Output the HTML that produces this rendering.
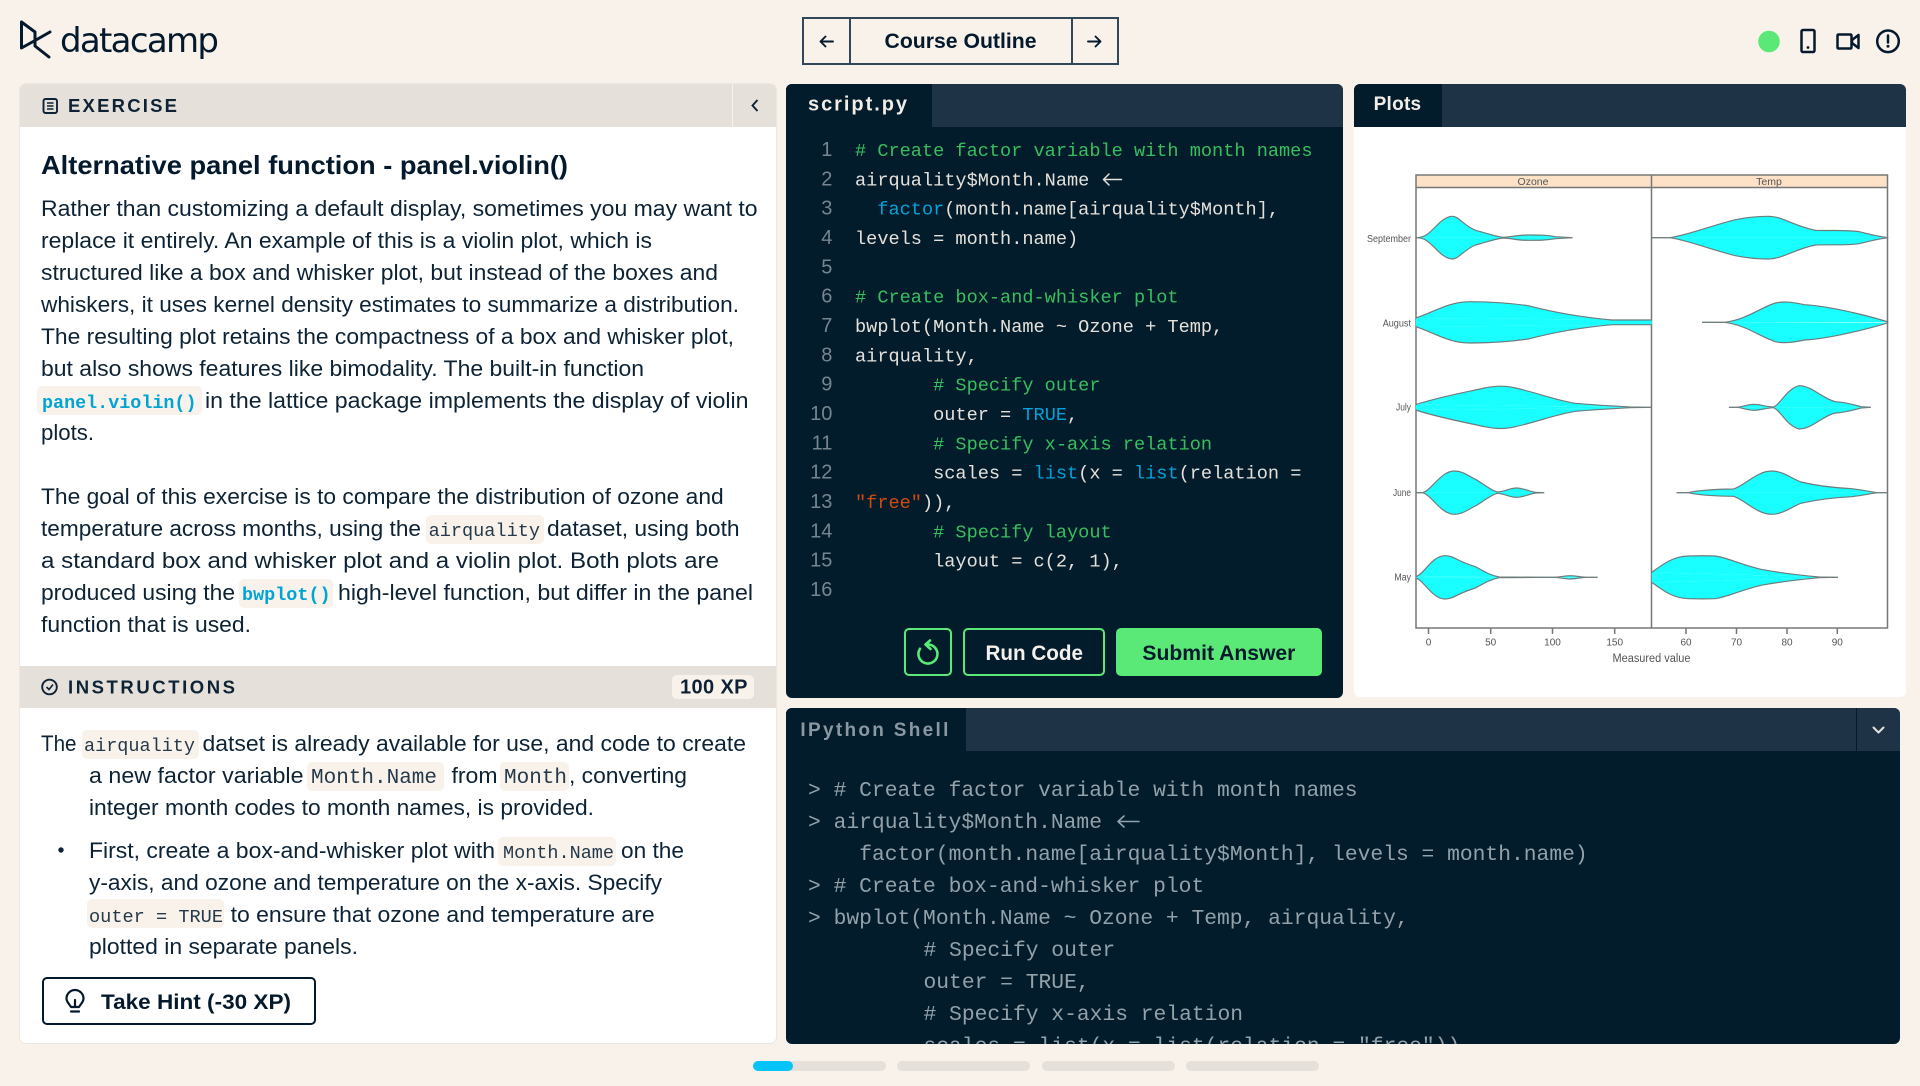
<!DOCTYPE html>
<html lang="en">
<head>
<meta charset="utf-8">
<title>DataCamp exercise</title>
<style>
html,body{margin:0;padding:0;width:1920px;height:1086px;overflow:hidden;background:#f8f2eb}
#root{position:relative;width:1920px;height:1086px;overflow:hidden;filter:blur(.35px)}
.p{position:absolute;box-sizing:border-box}
.white{background:#fff;border-radius:6px;box-shadow:0 0 0 1px #ece7e0}
.dark{background:#021c2c;border-radius:6px}
.hl{background:#e5e1da;border-radius:6px 6px 0 0}
.hd{background:#1f3347;border-radius:6px 6px 0 0}
.tab{background:#021c2c;border-radius:6px 0 0 0}
.bar{background:#e5e1da;border-radius:5px}
svg.o{position:absolute;left:0;top:0}
text{white-space:pre}
.b{font:22px "Liberation Sans",sans-serif;fill:#0d2335}
.h{font:bold 18.5px "Liberation Sans",sans-serif;fill:#0d2335}
.m{font:18.5px "Liberation Mono",monospace;fill:#25394a}
.mb{font:21px "Liberation Mono",monospace;fill:#25394a}
.blue{font:bold 18.5px "Liberation Mono",monospace;fill:#00a5d6}
.c{font:18.6px "Liberation Mono",monospace;fill:#e5e1da}
.n{font:20px "Liberation Sans",sans-serif;fill:#77858f;text-anchor:end}
.sh{font:21.3px "Liberation Mono",monospace;fill:#93a1a9}
.t{font:bold 21.5px "Liberation Sans",sans-serif}
.pl{font:10px "Liberation Sans",sans-serif;fill:#555}
.vi path{fill:#19ffff;stroke:#6e7c7c;stroke-width:1.2;vector-effect:non-scaling-stroke}
.vi polygon{fill:#19ffff;stroke:none}
</style>
</head>
<body>
<div id="root">
  <!-- Exercise column -->
  <div class="p white" style="left:20px;top:84px;width:756px;height:959px"></div>
  <div class="p hl" style="left:20px;top:84px;width:756px;height:43px"></div>
  <div class="p" style="left:732px;top:84px;width:1px;height:43px;background:#f8f2eb"></div>
  <div class="p" style="left:20px;top:666px;width:756px;height:42px;background:#e5e1da"></div>
  <div class="p" style="left:672px;top:675px;width:82px;height:24px;background:#f8f2eb;border-radius:5px"></div>
  <div class="p" style="left:37px;top:386px;width:165px;height:29px;background:#f8f2eb;border-radius:5px"></div>
  <div class="p" style="left:426px;top:515px;width:118px;height:29px;background:#f8f2eb;border-radius:5px"></div>
  <div class="p" style="left:239px;top:579px;width:94px;height:29px;background:#f8f2eb;border-radius:5px"></div>
  <div class="p" style="left:82px;top:730px;width:117px;height:29px;background:#f8f2eb;border-radius:5px"></div>
  <div class="p" style="left:307px;top:762px;width:137px;height:29px;background:#f8f2eb;border-radius:5px"></div>
  <div class="p" style="left:500px;top:762px;width:69px;height:29px;background:#f8f2eb;border-radius:5px"></div>
  <div class="p" style="left:498px;top:837px;width:118px;height:29px;background:#f8f2eb;border-radius:5px"></div>
  <div class="p" style="left:87px;top:899px;width:137px;height:29px;background:#f8f2eb;border-radius:5px"></div>
  <div class="p" style="left:42px;top:977px;width:274px;height:48px;border:2.5px solid #05192d;border-radius:5px"></div>

  <!-- Editor -->
  <div class="p dark" style="left:786px;top:84px;width:557px;height:614px"></div>
  <div class="p hd" style="left:786px;top:84px;width:557px;height:43px"></div>
  <div class="p tab" style="left:786px;top:84px;width:146px;height:43px"></div>
  <div class="p" style="left:904px;top:628px;width:48px;height:48px;border:2.5px solid #5ae877;border-radius:5px"></div>
  <div class="p" style="left:963px;top:628px;width:142px;height:48px;border:2.5px solid #5ae877;border-radius:5px"></div>
  <div class="p" style="left:1116px;top:628px;width:206px;height:48px;background:#5ae877;border-radius:5px"></div>

  <!-- Plots -->
  <div class="p white" style="left:1354px;top:84px;width:552px;height:613px;box-shadow:none"></div>
  <div class="p hd" style="left:1354px;top:84px;width:552px;height:43px"></div>
  <div class="p tab" style="left:1354px;top:84px;width:88px;height:43px"></div>

  <!-- Shell -->
  <div class="p dark" style="left:786px;top:708px;width:1114px;height:336px"></div>
  <div class="p hd" style="left:786px;top:708px;width:1114px;height:43px"></div>
  <div class="p tab" style="left:786px;top:708px;width:180px;height:43px"></div>
  <div class="p" style="left:1856px;top:708px;width:1px;height:43px;background:#021c2c"></div>

  <!-- Progress -->
  <div class="p bar" style="left:753px;top:1061px;width:133px;height:10px"></div>
  <div class="p bar" style="left:897px;top:1061px;width:133px;height:10px"></div>
  <div class="p bar" style="left:1042px;top:1061px;width:133px;height:10px"></div>
  <div class="p bar" style="left:1186px;top:1061px;width:133px;height:10px"></div>
  <div class="p" style="left:753px;top:1061px;width:40px;height:10px;background:#05c3fb;border-radius:5px"></div>

  <!-- Nav -->
  <div class="p" style="left:802px;top:17px;width:317px;height:48px;border:2px solid #33475a"></div>
  <div class="p" style="left:849px;top:17px;width:2px;height:48px;background:#33475a"></div>
  <div class="p" style="left:1071px;top:17px;width:2px;height:48px;background:#33475a"></div>

  <svg class="o" width="1920" height="1086" viewBox="0 0 1920 1086" xmlns="http://www.w3.org/2000/svg">
    <defs>
      <clipPath id="shc"><rect x="786" y="751" width="1114" height="293"/></clipPath>
    </defs>

    <!-- Logo -->
    <g fill="none" stroke="#05192d" stroke-width="3" stroke-linejoin="round" stroke-linecap="round">
      <path d="M21.5 22V48L35 40.5M21.5 22L35 32V46L49 57M35 40.5L50 32"/>
    </g>
    <text x="60" y="52" font-family="DejaVu Sans" font-size="34" fill="#05192d" textLength="159" lengthAdjust="spacing">datacamp</text>

    <!-- Nav content -->
    <g fill="none" stroke="#05192d" stroke-width="1.9" stroke-linecap="round" stroke-linejoin="round">
      <path d="M833 41.5H820.5M825.5 36.5L820.5 41.5L825.5 46.5"/>
      <path d="M1088 41.5H1100.5M1095.5 36.5L1100.5 41.5L1095.5 46.5"/>
    </g>
    <text class="t" x="884.5" y="48" fill="#05192d" textLength="152" lengthAdjust="spacingAndGlyphs">Course Outline</text>

    <!-- Header icons -->
    <circle cx="1769" cy="41.5" r="10.8" fill="#5ae877"/>
    <g fill="none" stroke="#05192d" stroke-width="2.5" stroke-linejoin="round">
      <rect x="1801.5" y="30" width="13" height="22" rx="1.5"/>
      <rect x="1837.5" y="34.5" width="14" height="14" rx="1"/>
      <path d="M1852 40L1858.5 35V48L1852 43Z"/>
      <circle cx="1888" cy="41.3" r="10.8"/>
    </g>
    <circle cx="1808" cy="47.5" r="1.4" fill="#05192d"/>
    <path d="M1888 35.5V42.5" stroke="#05192d" stroke-width="2.5" stroke-linecap="round"/>
    <circle cx="1888" cy="46.3" r="1.5" fill="#05192d"/>

    <!-- Exercise header -->
    <g fill="none" stroke="#0d2335" stroke-width="1.9">
      <rect x="43.5" y="99" width="13.5" height="14" rx="2"/>
      <path d="M47 103H53.5M47 106H53.5M47 109H53.5" stroke-width="1.4"/>
      <path d="M757.5 100L752.5 105.5L757.5 111" stroke-width="1.9"/>
      <circle cx="49.5" cy="687" r="7.3"/>
      <path d="M46.5 687L49 689.5L53 684.5" stroke-width="1.6"/>
    </g>
    <text class="h" x="68" y="112" textLength="109" lengthAdjust="spacing">EXERCISE</text>
    <text class="h" x="68" y="693.5" textLength="167" lengthAdjust="spacing">INSTRUCTIONS</text>
    <text class="h" x="680" y="693.5" textLength="67.5" lengthAdjust="spacing" style="font-size:20px">100 XP</text>

    <!-- Exercise copy -->
    <text x="41" y="174" font-family="Liberation Sans" font-size="26" font-weight="bold" fill="#05192d" textLength="527" lengthAdjust="spacingAndGlyphs">Alternative panel function - panel.violin()</text>
    <text class="b" x="41" y="216" textLength="716.6" lengthAdjust="spacingAndGlyphs">Rather than customizing a default display, sometimes you may want to</text>
    <text class="b" x="41" y="248" textLength="611" lengthAdjust="spacingAndGlyphs">replace it entirely. An example of this is a violin plot, which is</text>
    <text class="b" x="41" y="280" textLength="677" lengthAdjust="spacingAndGlyphs">structured like a box and whisker plot, but instead of the boxes and</text>
    <text class="b" x="41" y="312" textLength="698" lengthAdjust="spacingAndGlyphs">whiskers, it uses kernel density estimates to summarize a distribution.</text>
    <text class="b" x="41" y="344" textLength="693" lengthAdjust="spacingAndGlyphs">The resulting plot retains the compactness of a box and whisker plot,</text>
    <text class="b" x="41" y="376" textLength="603" lengthAdjust="spacingAndGlyphs">but also shows features like bimodality. The built-in function</text>
    <text class="blue" x="42" y="408" textLength="154.5" lengthAdjust="spacingAndGlyphs">panel.violin()</text>
    <text class="b" x="205" y="408" textLength="543.5" lengthAdjust="spacingAndGlyphs">in the lattice package implements the display of violin</text>
    <text class="b" x="41" y="440" textLength="53" lengthAdjust="spacingAndGlyphs">plots.</text>

    <text class="b" x="41" y="504" textLength="682.7" lengthAdjust="spacingAndGlyphs">The goal of this exercise is to compare the distribution of ozone and</text>
    <text class="b" x="41" y="536" textLength="380" lengthAdjust="spacingAndGlyphs">temperature across months, using the</text>
    <text class="m" x="428.6" y="536" textLength="111.4" lengthAdjust="spacingAndGlyphs">airquality</text>
    <text class="b" x="547" y="536" textLength="192.6" lengthAdjust="spacingAndGlyphs">dataset, using both</text>
    <text class="b" x="41" y="568" textLength="678" lengthAdjust="spacingAndGlyphs">a standard box and whisker plot and a violin plot. Both plots are</text>
    <text class="b" x="41" y="600" textLength="194" lengthAdjust="spacingAndGlyphs">produced using the</text>
    <text class="blue" x="242" y="600" textLength="88.6" lengthAdjust="spacingAndGlyphs">bwplot()</text>
    <text class="b" x="338" y="600" textLength="415" lengthAdjust="spacingAndGlyphs">high-level function, but differ in the panel</text>
    <text class="b" x="41" y="632" textLength="210" lengthAdjust="spacingAndGlyphs">function that is used.</text>

    <!-- Instructions copy -->
    <text class="b" x="41" y="751" textLength="35.5" lengthAdjust="spacingAndGlyphs">The</text>
    <text class="m" x="84" y="751" textLength="111" lengthAdjust="spacingAndGlyphs">airquality</text>
    <text class="b" x="202.5" y="751" textLength="543.5" lengthAdjust="spacingAndGlyphs">datset is already available for use, and code to create</text>
    <text class="b" x="89" y="783" textLength="214.5" lengthAdjust="spacingAndGlyphs">a new factor variable</text>
    <text class="mb" x="311" y="783" textLength="126" lengthAdjust="spacingAndGlyphs">Month.Name</text>
    <text class="b" x="451.5" y="783" textLength="46" lengthAdjust="spacingAndGlyphs">from</text>
    <text class="mb" x="504" y="783" textLength="63" lengthAdjust="spacingAndGlyphs">Month</text>
    <text class="b" x="569" y="783" textLength="118" lengthAdjust="spacingAndGlyphs">, converting</text>
    <text class="b" x="89" y="815" textLength="505" lengthAdjust="spacingAndGlyphs">integer month codes to month names, is provided.</text>
    <circle cx="61" cy="850" r="2.7" fill="#0d2335"/>
    <text class="b" x="89" y="858" textLength="406" lengthAdjust="spacingAndGlyphs">First, create a box-and-whisker plot with</text>
    <text class="m" x="503" y="858" textLength="111" lengthAdjust="spacingAndGlyphs">Month.Name</text>
    <text class="b" x="621" y="858" textLength="63" lengthAdjust="spacingAndGlyphs">on the</text>
    <text class="b" x="89" y="890" textLength="573" lengthAdjust="spacingAndGlyphs">y-axis, and ozone and temperature on the x-axis. Specify</text>
    <text class="m" x="89" y="922" textLength="134" lengthAdjust="spacingAndGlyphs">outer = TRUE</text>
    <text class="b" x="230.6" y="922" textLength="424" lengthAdjust="spacingAndGlyphs">to ensure that ozone and temperature are</text>
    <text class="b" x="89" y="954" textLength="269" lengthAdjust="spacingAndGlyphs">plotted in separate panels.</text>

    <!-- Hint button -->
    <g fill="none" stroke="#05192d" stroke-width="2.2" stroke-linecap="round" stroke-linejoin="round">
      <path d="M71 1007C69 1003.5 66.5 1002 66.5 998.5A8.5 8.5 0 1 1 83.5 998.5C83.5 1002 81 1003.5 79 1007Z"/>
      <path d="M71 1011.5H79M75 1007V1000"/>
    </g>
    <text class="t" x="101" y="1009" fill="#05192d" textLength="190" lengthAdjust="spacingAndGlyphs">Take Hint (-30 XP)</text>

    <!-- Editor tab -->
    <text x="808" y="110.5" font-family="Liberation Sans" font-weight="bold" font-size="20" fill="#f1ede7" textLength="99" lengthAdjust="spacing">script.py</text>

    <!-- Line numbers -->
    <text class="n" x="832.4" y="156">1</text>
    <text class="n" x="832.4" y="185.3">2</text>
    <text class="n" x="832.4" y="214.7">3</text>
    <text class="n" x="832.4" y="244">4</text>
    <text class="n" x="832.4" y="273.3">5</text>
    <text class="n" x="832.4" y="302.7">6</text>
    <text class="n" x="832.4" y="332">7</text>
    <text class="n" x="832.4" y="361.3">8</text>
    <text class="n" x="832.4" y="390.7">9</text>
    <text class="n" x="832.4" y="420">10</text>
    <text class="n" x="832.4" y="449.3">11</text>
    <text class="n" x="832.4" y="478.7">12</text>
    <text class="n" x="832.4" y="508">13</text>
    <text class="n" x="832.4" y="537.3">14</text>
    <text class="n" x="832.4" y="566.7">15</text>
    <text class="n" x="832.4" y="596">16</text>

    <!-- Code -->
    <text class="c" x="855" y="156" style="fill:#37bf5e"># Create factor variable with month names</text>
    <text class="c" x="855" y="185.3">airquality$Month.Name</text>
    <path d="M1103.5 179.5H1121.5M1109 174L1103.5 179.5L1109 185" fill="none" stroke="#e5e1da" stroke-width="1.5" stroke-linecap="round" stroke-linejoin="round"/>
    <text class="c" x="855" y="214.7">  <tspan style="fill:#00a3d9">factor</tspan>(month.name[airquality$Month],</text>
    <text class="c" x="855" y="244">levels = month.name)</text>
    <text class="c" x="855" y="302.7" style="fill:#37bf5e"># Create box-and-whisker plot</text>
    <text class="c" x="855" y="332">bwplot(Month.Name ~ Ozone + Temp,</text>
    <text class="c" x="855" y="361.3">airquality,</text>
    <text class="c" x="855" y="390.7" style="fill:#37bf5e">       # Specify outer</text>
    <text class="c" x="855" y="420">       outer = <tspan style="fill:#00a3d9">TRUE</tspan>,</text>
    <text class="c" x="855" y="449.3" style="fill:#37bf5e">       # Specify x-axis relation</text>
    <text class="c" x="855" y="478.7">       scales = <tspan style="fill:#00a3d9">list</tspan>(x = <tspan style="fill:#00a3d9">list</tspan>(relation =</text>
    <text class="c" x="855" y="508"><tspan style="fill:#d24a0c">"free"</tspan>)),</text>
    <text class="c" x="855" y="537.3" style="fill:#37bf5e">       # Specify layout</text>
    <text class="c" x="855" y="566.7">       layout = c(2, 1),</text>

    <!-- Editor buttons -->
    <g fill="none" stroke="#5ae877" stroke-width="2.6" stroke-linecap="round" stroke-linejoin="round">
      <path d="M928 644.5A9.5 9.5 0 1 1 920 648.8"/>
      <path d="M930 640.5L925.5 644.5L930.5 649"/>
    </g>
    <text class="t" x="985.5" y="660" fill="#f4f1ec" textLength="97.5" lengthAdjust="spacingAndGlyphs">Run Code</text>
    <text class="t" x="1142.4" y="660" fill="#05192d" textLength="153" lengthAdjust="spacingAndGlyphs">Submit Answer</text>

    <!-- Plots tab -->
    <text x="1373.6" y="110" font-family="Liberation Sans" font-weight="bold" font-size="19" fill="#f1ede7" textLength="47.5" lengthAdjust="spacing">Plots</text>

    <!-- Plot frame -->
    <rect x="1416" y="175" width="471.5" height="12.5" fill="#fde2c8"/>
    <g fill="none" stroke="#777" stroke-width="1.5">
      <rect x="1416" y="175" width="471.5" height="453"/>
      <path d="M1651.5 175V628M1416 187.5H1887.5"/>
      <path d="M1428.5 628V634M1490.7 628V634M1552.5 628V634M1614.7 628V634M1686 628V634M1736.5 628V634M1787 628V634M1837.3 628V634"/>
    </g>
    <text class="pl" x="1533" y="185" text-anchor="middle" style="font-size:10.5px">Ozone</text>
    <text class="pl" x="1769" y="185" text-anchor="middle" style="font-size:10.5px">Temp</text>
    <text class="pl" x="1367" y="242" textLength="44" lengthAdjust="spacingAndGlyphs">September</text>
    <text class="pl" x="1382.7" y="326.7" textLength="28.3" lengthAdjust="spacingAndGlyphs">August</text>
    <text class="pl" x="1396" y="410.7" textLength="15" lengthAdjust="spacingAndGlyphs">July</text>
    <text class="pl" x="1393" y="496" textLength="18" lengthAdjust="spacingAndGlyphs">June</text>
    <text class="pl" x="1394.4" y="580.7" textLength="16.6" lengthAdjust="spacingAndGlyphs">May</text>
    <text class="pl" x="1428.5" y="645.5" text-anchor="middle">0</text>
    <text class="pl" x="1490.7" y="645.5" text-anchor="middle">50</text>
    <text class="pl" x="1552.5" y="645.5" text-anchor="middle">100</text>
    <text class="pl" x="1614.7" y="645.5" text-anchor="middle">150</text>
    <text class="pl" x="1686" y="645.5" text-anchor="middle">60</text>
    <text class="pl" x="1736.5" y="645.5" text-anchor="middle">70</text>
    <text class="pl" x="1787" y="645.5" text-anchor="middle">80</text>
    <text class="pl" x="1837.3" y="645.5" text-anchor="middle">90</text>
    <text class="pl" x="1612.5" y="662" textLength="78" lengthAdjust="spacingAndGlyphs" style="font-size:11.5px">Measured value</text>

    <!-- Violins -->
    <g class="vi" transform="translate(1350,0) scale(.36364,.33333)">
      <g transform="translate(0,713)">
        <path id="v1" d="M181 0C205 0 215-10 240-38C258-58 270-64 282-64C298-64 315-35 345-22C375-14 390-6 420-1C445-2 460-8 490-8C520-8 540-8 565-3L612 0"/><use href="#v1" transform="scale(1,-1)"/>
        <path id="v2" d="M830 0L880 0C930-8 990-35 1060-54C1100-63 1130-64 1150-64C1190-64 1220-35 1280-22C1320-20 1360-24 1400-18C1430-10 1450-4 1480 0"/><use href="#v2" transform="scale(1,-1)"/>
      </g>
      <g transform="translate(0,967)">
        <polygon points="181,-13 830,-7 830,7 181,13"/>
        <path id="v3" d="M181-13C230-30 270-62 330-62C380-62 440-58 490-50C560-30 640-15 720-7L830-7"/><use href="#v3" transform="scale(1,-1)"/>
        <path id="v4" d="M968 0L1030 0C1090-8 1130-45 1170-58C1190-63 1210-62 1250-53C1300-50 1350-38 1400-25C1430-17 1460-8 1480-1"/><use href="#v4" transform="scale(1,-1)"/>
      </g>
    </g>
    <g class="vi" transform="translate(1350,380) scale(.36364,.33333)">
      <g transform="translate(0,82)">
        <polygon points="181,-8 828,0 181,8"/>
        <path id="v5" d="M181-8C240-30 330-48 370-58C400-65 430-65 455-58C510-45 570-20 620-12C670-7 720-4 770-1L828 0"/><use href="#v5" transform="scale(1,-1)"/>
        <path id="v6" d="M1042 0L1065 0C1085-3 1095-9 1110-9C1130-9 1140-2 1165-1C1185-10 1200-55 1235-65C1270-65 1300-25 1335-17C1365-15 1385-8 1405-2L1432 0"/><use href="#v6" transform="scale(1,-1)"/>
      </g>
      <g transform="translate(0,338)">
        <path id="v7" d="M181 0L200 0C225-8 250-65 287-65C310-65 325-50 345-40C365-28 385-8 405-2C425-3 440-14 458-14C475-14 490-5 510-1L534 0"/><use href="#v7" transform="scale(1,-1)"/>
        <path id="v8" d="M898 0L930 0C960-8 1000-10 1055-11C1090-25 1120-65 1160-65C1190-65 1215-42 1240-32C1280-22 1320-15 1380-12C1410-8 1435-2 1450 0L1478 0"/><use href="#v8" transform="scale(1,-1)"/>
      </g>
      <g transform="translate(0,592)">
        <polygon points="181,-2 410,-1 410,1 181,2"/>
        <path id="v9" d="M181-2C205-10 225-65 262-65C285-65 295-48 345-32C365-20 385-6 410-1L555 0C580 0 590-5 605-5C620-5 630-1 650 0L681 0"/><use href="#v9" transform="scale(1,-1)"/>
        <polygon points="830,-15 1342,0 830,15"/>
        <path id="v10" d="M830-15C860-38 885-62 930-64C960-65 980-65 1005-64C1040-58 1070-40 1130-24C1190-12 1240-6 1290-1L1342 0"/><use href="#v10" transform="scale(1,-1)"/>
      </g>
    </g>

    <!-- Shell -->
    <text x="800.4" y="736" font-family="Liberation Sans" font-weight="bold" font-size="19" fill="#8b98a2" textLength="148" lengthAdjust="spacing">IPython Shell</text>
    <path d="M1873.5 727.5L1878.5 732.5L1883.5 727.5" fill="none" stroke="#e5e1da" stroke-width="2" stroke-linecap="round" stroke-linejoin="round"/>
    <g clip-path="url(#shc)">
      <text class="sh" x="808" y="796">&gt;</text><text class="sh" x="833.6" y="796"># Create factor variable with month names</text>
      <text class="sh" x="808" y="828">&gt;</text><text class="sh" x="833.6" y="828">airquality$Month.Name</text>
      <path d="M1118 821.5H1139M1124 816L1118 821.5L1124 827" fill="none" stroke="#93a1a9" stroke-width="1.6" stroke-linecap="round" stroke-linejoin="round"/>
      <text class="sh" x="859.2" y="860">factor(month.name[airquality$Month], levels = month.name)</text>
      <text class="sh" x="808" y="892">&gt;</text><text class="sh" x="833.6" y="892"># Create box-and-whisker plot</text>
      <text class="sh" x="808" y="924">&gt;</text><text class="sh" x="833.6" y="924">bwplot(Month.Name ~ Ozone + Temp, airquality,</text>
      <text class="sh" x="923.5" y="956"># Specify outer</text>
      <text class="sh" x="923.5" y="988">outer = TRUE,</text>
      <text class="sh" x="923.5" y="1020"># Specify x-axis relation</text>
      <text class="sh" x="923.5" y="1052">scales = list(x = list(relation = "free"))</text>
    </g>
  </svg>
</div>
</body>
</html>
